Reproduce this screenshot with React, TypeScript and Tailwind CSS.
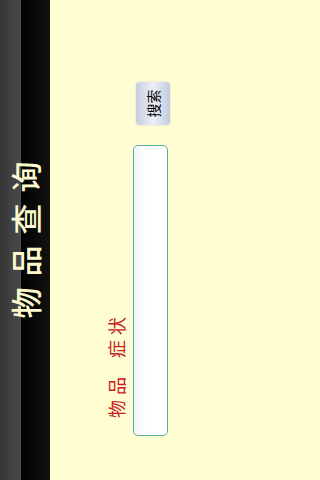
export default function App() {
    return (
        <div className="relative w-[320px] h-[480px] overflow-hidden bg-[#fffdd2]">
            {/* the app is drawn landscape and turned a quarter left */}
            <div className="absolute left-0 top-0 w-[480px] h-[320px] origin-top-left translate-y-[480px] -rotate-90 flex flex-col font-['Noto_Sans_CJK_SC',sans-serif]">
                <div className="h-[50px] shrink-0 flex items-center justify-center bg-[linear-gradient(to_bottom,#363636_0px,#4a4a4a_21px,#020202_21px,#121212_50px)]">
                    <span className="text-[31px] leading-[32px] font-medium tracking-[11px] pl-[11px] text-[#fdf9cf]">物品查询</span>
                </div>
                <div className="flex-1 flex flex-col bg-[#fffdd2]">
                    <div className="flex gap-[14px] pl-[62px] mt-[57px] text-[18px] leading-[19px] tracking-[5px] text-[#c8201c]">
                        <span>物品</span>
                        <span>症状</span>
                    </div>
                    <div className="flex items-start mt-[7px]">
                        <input className="ml-[44px] w-[291px] h-[35px] rounded-[5px] border-[1.5px] border-[#58ada4] bg-[linear-gradient(to_bottom,#f2f6f6,#ffffff_40%)] outline-none" />
                        <button className="ml-[20px] mt-[3px] w-[43px] h-[34px] rounded-[4px] bg-[linear-gradient(to_bottom,#c4cce0,#eef0f7_50%,#c2cadd)] shadow-[0_0_2px_#c8ccd4] text-[14px] leading-none text-black">搜索</button>
                    </div>
                </div>
            </div>
        </div>
    );
}
